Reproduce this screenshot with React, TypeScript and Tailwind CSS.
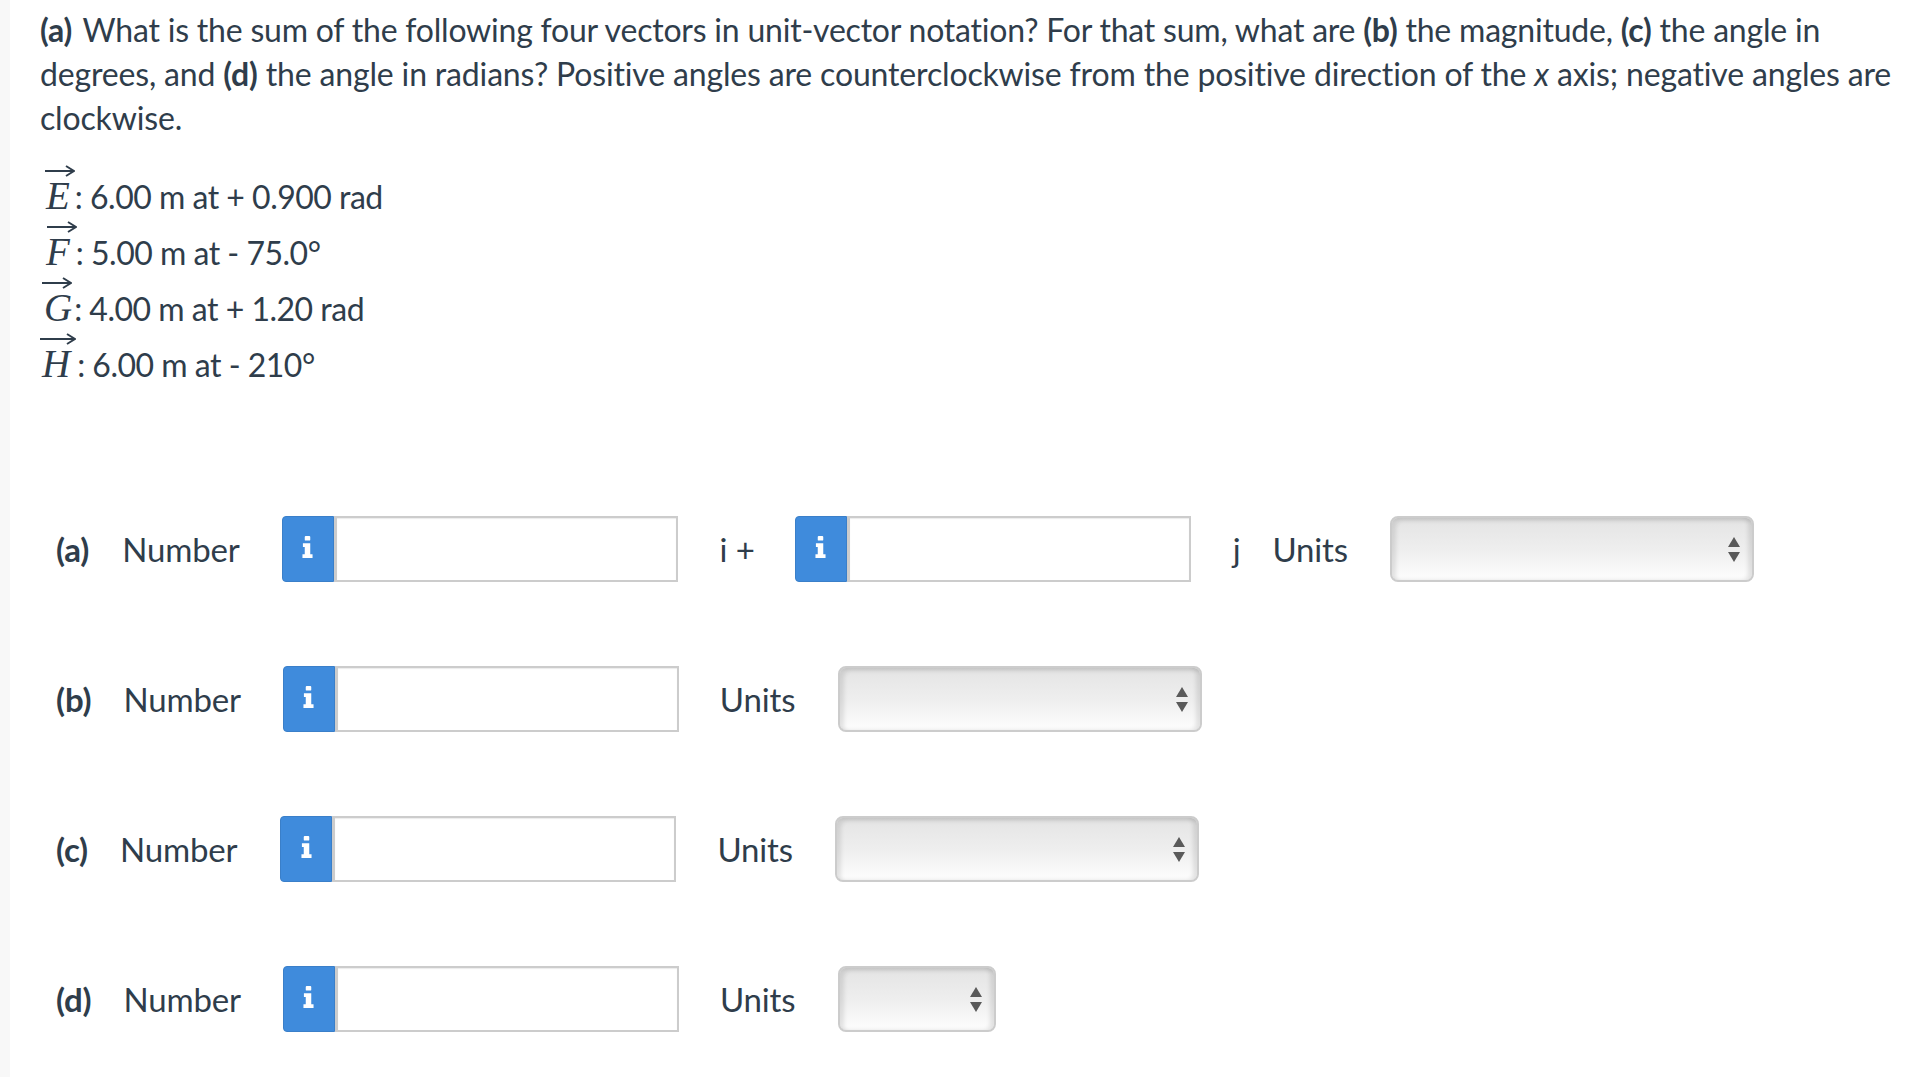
const Vec = ({ l, arrowW = 32, dx = 0, cls = "mr-[4px]" }: { l: string; arrowW?: number; dx?: number; cls?: string }) => (
  <span className={`relative inline-block ${cls} font-['Liberation_Serif',serif] italic text-[39px] tracking-normal`}>
    {l}
    <svg className="absolute top-[-5px] left-0" style={{ marginLeft: dx }} width={arrowW} height="16" viewBox={`0 0 ${arrowW} 16`} fill="none" stroke="#2f3d4b" strokeWidth="2">
      <path d={`M0 8H${arrowW - 1}M${arrowW - 9} 3L${arrowW - 1} 8L${arrowW - 9} 13`} />
    </svg>
  </span>
);

const Info = () => (
  <div className="w-[52px] h-[66px] flex items-center justify-center bg-[#3f8bdc] rounded-l-[4px] border border-[#3a7fc9] shrink-0 pb-[4px]">
    <svg width="11" height="22" viewBox="0 0 12 24" fill="#fff">
      <rect x="3" y="0" width="6" height="5" rx="1" />
      <path d="M1 8H9V20H11.500V24H0.500V20H3V12H1Z" />
    </svg>
  </div>
);

const Num = ({ w = "w-[344px]" }: { w?: string }) => (
  <div className="flex shrink-0">
    <Info />
    <input className={`${w} h-[66px] border-2 border-l-[3px] border-[#cccccc] bg-white outline-none shadow-[inset_0_1px_1px_rgba(0,0,0,0.08)]`} />
  </div>
);

const Sel = ({ w }: { w: string }) => (
  <div className={`${w} relative h-[66px] shrink-0 rounded-[8px] border-2 border-[#cccccc] bg-gradient-to-b from-[#e4e4e4] via-[#eeeeee] to-[#fdfdfd] shadow-[inset_4px_3px_4px_rgba(0,0,0,0.1),inset_-4px_0_4px_rgba(0,0,0,0.1)]`}>
    <svg className="absolute right-[12px] top-[19px]" width="12" height="25" viewBox="0 0 12 25" fill="#5a5a5a">
      <path d="M6 0L12 10H0Z" />
      <path d="M0 15H12L6 25Z" />
    </svg>
  </div>
);

const Row = ({ children }: { children: React.ReactNode }) => (
  <div className="flex items-center h-[66px] mb-[84px] pl-[56px] text-[33px]">{children}</div>
);

const Tag = ({ t, className = "" }: { t: string; className?: string }) => <span className={`font-bold ${className}`}>{t}</span>;

export default function App() {
  return (
    <div className="relative min-h-[1077px] w-[1914px] overflow-hidden bg-white font-['Lato',sans-serif] text-[32px] leading-[44px] text-[#2f3d4b] border-l-[10px] border-[#f8f8f8] tracking-[-0.16px]">
      <div className="pl-[30px] pt-[8px] w-[1904px] whitespace-nowrap">
        <p className="tracking-[-0.21px]"><b className="mr-[3px]">(a)</b> What is the sum of the following four vectors in unit-vector notation? For that sum, what are <b>(b)</b> the magnitude, <b>(c)</b> the angle in</p>
        <p>degrees, and <b>(d)</b> the angle in radians? Positive angles are counterclockwise from the positive direction of the <i>x</i> axis; negative angles are</p>
        <p>clockwise.</p>
      </div>
      <div className="pl-[36px] mt-[28px] tracking-[-0.5px]">
        <div className="h-[56px] leading-[56px]"><Vec l="E" arrowW={30} dx={-1} cls="mr-[5px]" />: 6.00 m at + 0.900 rad</div>
        <div className="h-[56px] leading-[56px]"><Vec l="F" arrowW={30} dx={1} cls="mr-[6px]" />: 5.00 m at - 75.0°</div>
        <div className="h-[56px] leading-[56px]"><Vec l="G" arrowW={30} dx={-2} cls="-ml-[2px] mr-[2px]" />: 4.00 m at + 1.20 rad</div>
        <div className="h-[56px] leading-[56px]"><Vec l="H" arrowW={36} dx={-2} cls="-ml-[4px] mr-[7px]" />: 6.00 m at - 210°</div>
      </div>
      <div className="mt-[124px] -ml-[10px]">
        <Row>
          <Tag t="(a)" className="mr-[33px]" />
          <span className="mr-[42px]">Number</span>
          <Num />
          <span className="ml-[42px] mr-[40px]">i +</span>
          <Num />
          <span className="ml-[42px] mr-[32px]">j</span>
          <span className="mr-[42px]">Units</span>
          <Sel w="w-[364px]" />
        </Row>
        <Row>
          <Tag t="(b)" className="mr-[32px]" />
          <span className="mr-[42px]">Number</span>
          <Num />
          <span className="ml-[41px] mr-[43px]">Units</span>
          <Sel w="w-[364px]" />
        </Row>
        <Row>
          <Tag t="(c)" className="mr-[32px]" />
          <span className="mr-[43px]">Number</span>
          <Num />
          <span className="ml-[41px] mr-[42px]">Units</span>
          <Sel w="w-[364px]" />
        </Row>
        <Row>
          <Tag t="(d)" className="mr-[32px]" />
          <span className="mr-[42px]">Number</span>
          <Num />
          <span className="ml-[41px] mr-[43px]">Units</span>
          <Sel w="w-[158px]" />
        </Row>
      </div>
    </div>
  );
}
